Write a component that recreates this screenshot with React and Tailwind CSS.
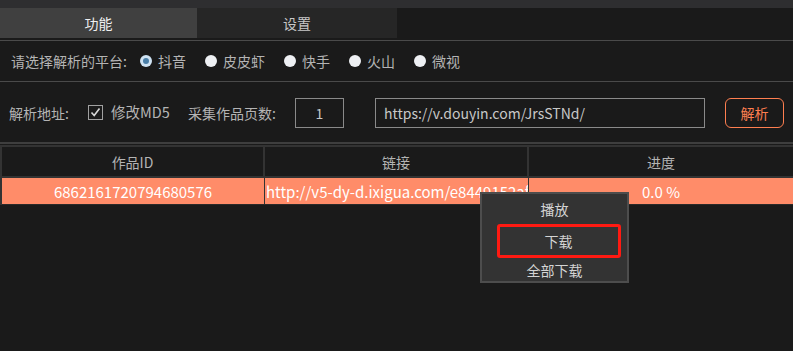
import React from "react";

const font = { fontFamily: '"Noto Sans CJK SC", "Noto Sans", sans-serif' };

function Radio({ checked }) {
  return checked ? (
    <span className="w-[12px] h-[12px] rounded-full bg-[#cfe3f3] flex items-center justify-center">
      <span className="w-[6px] h-[6px] rounded-full bg-[#4a7fa8]" />
    </span>
  ) : (
    <span className="w-[12px] h-[12px] rounded-full bg-[#eef0f3]" />
  );
}

export default function App() {
  const platforms = [
    ["抖音", true],
    ["皮皮虾", false],
    ["快手", false],
    ["火山", false],
    ["微视", false],
  ];
  return (
    <div
      className="relative w-[793px] h-[351px] bg-[#1a1a1a] overflow-hidden text-[14px] text-[#b4b4b4] leading-none"
      style={font}
    >
      <div className="h-[8px] bg-[#2e2e30]" />
      <div className="flex h-[30px]">
        <div className="w-[197px] bg-[#404040] flex items-center justify-center text-[#f0f0f0]">功能</div>
        <div className="w-[200px] bg-[#262626] flex items-center justify-center text-[#c8c8c8]">设置</div>
      </div>
      <div className="h-[2px]" />
      <div className="h-[1px] bg-[#4a4a4a]" />
      <div className="h-[40px] flex items-center pl-[11px]">
        <span className="mr-[13px]">请选择解析的平台:</span>
        {platforms.map(([name, c]) => (
          <span key={name} className="flex items-center mr-[19px]">
            <Radio checked={c} />
            <span className="ml-[6px]">{name}</span>
          </span>
        ))}
      </div>
      <div className="h-[1px] bg-[#4a4a4a]" />
      <div className="h-[60px] flex items-center pl-[9px] pt-[1px]">
        <span className="w-[79px]">解析地址:</span>
        <span className="w-[15px] h-[15px] border border-[#a0a0a0] flex items-center justify-center">
          <svg width="11" height="11" viewBox="0 0 11 11">
            <path d="M1.5 5.5 L4.2 8.5 L9.5 1.5" fill="none" stroke="#d8d8d8" strokeWidth="1.6" />
          </svg>
        </span>
        <span className="ml-[8px] w-[77px] text-[14.5px]">修改MD5</span>
        <span className="w-[107px]">采集作品页数:</span>
        <span className="w-[49px] h-[30px] border border-[#8a8a8a] flex items-center justify-center text-[#c8c8c8]">1</span>
        <span className="ml-[31px] w-[330px] h-[30px] border border-[#8a8a8a] flex items-center pl-[8px] text-[#c8c8c8] text-[14px]">
          https://v.douyin.com/JrsSTNd/
        </span>
        <span className="ml-[20px] w-[59px] h-[30px] border border-[#ff7f50] rounded-[6px] flex items-center justify-center text-[#ff7f50]">
          解析
        </span>
      </div>
      <div className="h-[2px] bg-[#3e3e3e]" />
      <div className="h-[1px]" />
      <div className="border-t-2 border-l-2 border-[#333333]">
        <div className="flex h-[31px] border-b-2 border-[#333333]">
          <div className="w-[263px] border-r-2 border-[#333333] flex items-center justify-center">作品ID</div>
          <div className="w-[264px] border-r-2 border-[#333333] flex items-center justify-center">链接</div>
          <div className="flex-1 flex items-center justify-center">进度</div>
        </div>
        <div className="flex h-[26px] bg-[#ff8c69] text-white text-[15px]">
          <div className="w-[263px] border-r border-[#333333] flex items-center justify-center">6862161720794680576</div>
          <div className="w-[264px] border-r border-[#333333] flex items-center overflow-hidden whitespace-nowrap pl-[1px]">
            http://v5-dy-d.ixigua.com/e8449152af
          </div>
          <div className="flex-1 flex items-center justify-center">0.0 %</div>
        </div>
        <div className="h-[1px] bg-[#2a2a2a]" />
      </div>
      <div className="absolute left-[480px] top-[192px] w-[149px] h-[91px] bg-[#333333] border-2 border-[#4d4d4d] flex flex-col items-center text-[#d4d4d4]">
        <div className="h-[30px] flex items-center mt-[1px]">播放</div>
        <div className="ml-[8px] w-[124px] h-[36px] border-[3px] border-[#ff1a12] rounded-[3px] flex items-center justify-center">
          下载
        </div>
        <div className="h-[24px] flex items-center">全部下载</div>
      </div>
    </div>
  );
}
